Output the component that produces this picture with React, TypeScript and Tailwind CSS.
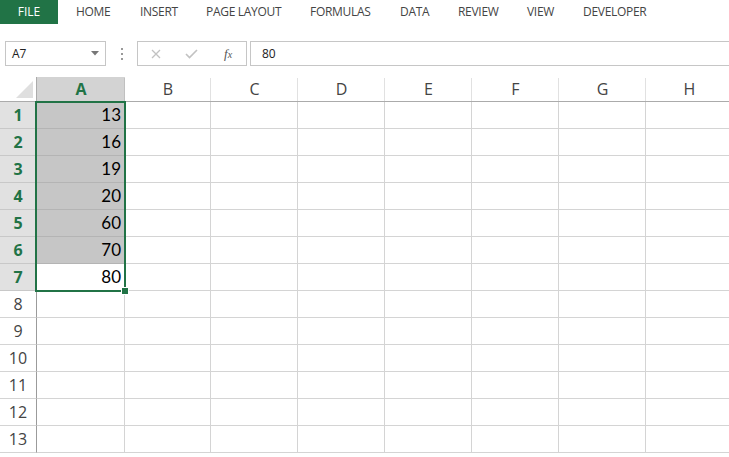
import React from "react";

const tabs: [string, number][] = [
  ["HOME", 76],
  ["INSERT", 140],
  ["PAGE LAYOUT", 206],
  ["FORMULAS", 310],
  ["DATA", 400],
  ["REVIEW", 458],
  ["VIEW", 527],
  ["DEVELOPER", 583],
];

const cols = ["A", "B", "C", "D", "E", "F", "G", "H"];
const colW = [88, 86, 87, 87, 87, 87, 87, 87];
const values = [13, 16, 19, 20, 60, 70, 80];
const rows = Array.from({ length: 13 }, (_, i) => i + 1);

const uiFont = { fontFamily: '"Open Sans", "Noto Sans", sans-serif' };
const cellFont = { fontFamily: 'Lato, "Liberation Sans", sans-serif' };

export default function App() {
  return (
    <div className="relative w-[729px] h-[457px] overflow-hidden bg-white" style={uiFont}>
      {/* Ribbon tabs */}
      <div className="relative h-[24px] text-[12px] text-[#444]">
        <div className="absolute left-0 top-0 h-[24px] w-[58px] bg-[#217346] text-white flex items-center justify-center">
          FILE
        </div>
        {tabs.map(([t, x]) => (
          <div key={t} className="absolute top-0 h-[24px] flex items-center tracking-[-0.3px]" style={{ left: x }}>
            {t}
          </div>
        ))}
      </div>

      {/* Formula bar */}
      <div className="mt-[17px] h-[25px] flex items-stretch text-[12px] text-[#222]">
        <div className="ml-[5px] w-[101px] border border-[#c6c6c6] flex items-center pl-[6px] pr-[6px] justify-between">
          <span>A7</span>
          <svg width="8" height="5" viewBox="0 0 8 5"><path d="M0 0H8L4 4.5Z" fill="#777" /></svg>
        </div>
        <div className="w-[31px] flex flex-col items-center justify-center gap-[3px]">
          <div className="w-[2px] h-[2px] bg-[#999]" />
          <div className="w-[2px] h-[2px] bg-[#999]" />
          <div className="w-[2px] h-[2px] bg-[#999]" />
        </div>
        <div className="w-[110px] border border-[#c6c6c6] flex items-center relative">
          <svg className="absolute left-[13px]" width="10" height="10" viewBox="0 0 10 10">
            <path d="M1 1L9 9M9 1L1 9" stroke="#c2c2c2" strokeWidth="1.3" />
          </svg>
          <svg className="absolute left-[47px]" width="13" height="10" viewBox="0 0 13 10">
            <path d="M1 5L4.5 8.5L12 1" stroke="#c2c2c2" strokeWidth="1.6" fill="none" />
          </svg>
          <span
            className="absolute left-[86px] text-[13px] italic text-[#555]"
            style={{ fontFamily: '"Liberation Serif", serif' }}
          >
            f<span className="text-[10px]">x</span>
          </span>
        </div>
        <div className="ml-[3px] flex-1 border border-[#c6c6c6] border-r-0 flex items-center pl-[11px]">80</div>
      </div>

      {/* Grid */}
      <div className="relative mt-[11px]">
        {/* Header row */}
        <div className="flex h-[25px]">
          <div className="w-[37px] h-[25px] shrink-0 border-b border-r border-[#ababab] bg-white relative">
            <svg className="absolute right-[3px] bottom-[3px]" width="17" height="17" viewBox="0 0 17 17">
              <path d="M17 0V17H0Z" fill="#dfdfdf" />
            </svg>
          </div>
          {cols.map((c, i) => (
            <div
              key={c}
              className={
                "h-[25px] border-b border-[#ababab] flex items-center justify-center text-[16px] shrink-0 relative " +
                (i === 0 ? "bg-[#d3d3d3] text-[#217346] font-bold" : "bg-white text-[#444]")
              }
              style={{ width: colW[i] }}
            >
              {c}
              <div
                className={"absolute right-0 top-[1px] bottom-0 w-px " + (i === 0 ? "bg-[#c0c0c0]" : "bg-[#e1e1e1]")}
              />
            </div>
          ))}
        </div>

        {rows.map((r) => {
          const sel = r <= 7;
          return (
            <div key={r} className="flex h-[27px]">
              <div
                className={
                  "w-[37px] h-[27px] shrink-0 border-r border-b flex items-center justify-center text-[16px] " +
                  (sel
                    ? "bg-[#e1e1e1] border-r-[#9b9b9b] border-b-[#c8c8c8] text-[#217346] font-bold"
                    : "bg-white border-r-[#9b9b9b] border-b-[#d4d4d4] text-[#444]")
                }
              >
                {r}
              </div>
              {cols.map((c, i) => {
                const filled = i === 0 && r <= 6;
                return (
                  <div
                    key={c}
                    className={
                      "h-[27px] shrink-0 border-r border-b flex items-center justify-end pr-[3px] text-[17px] text-black " +
                      (filled ? "bg-[#c6c6c6] border-[#b4b4b4]" : "bg-white border-[#d4d4d4]")
                    }
                    style={{ width: colW[i], ...cellFont }}
                  >
                    {i === 0 && r <= 7 ? values[r - 1] : ""}
                  </div>
                );
              })}
            </div>
          );
        })}

        {/* Selection border */}
        <div className="absolute left-[35px] top-[24px] w-[91px] h-[191px] border-2 border-[#217346]" />
        <div className="absolute left-[121px] top-[210px] w-[6px] h-[6px] bg-[#217346] border border-white box-content" />
      </div>
    </div>
  );
}
